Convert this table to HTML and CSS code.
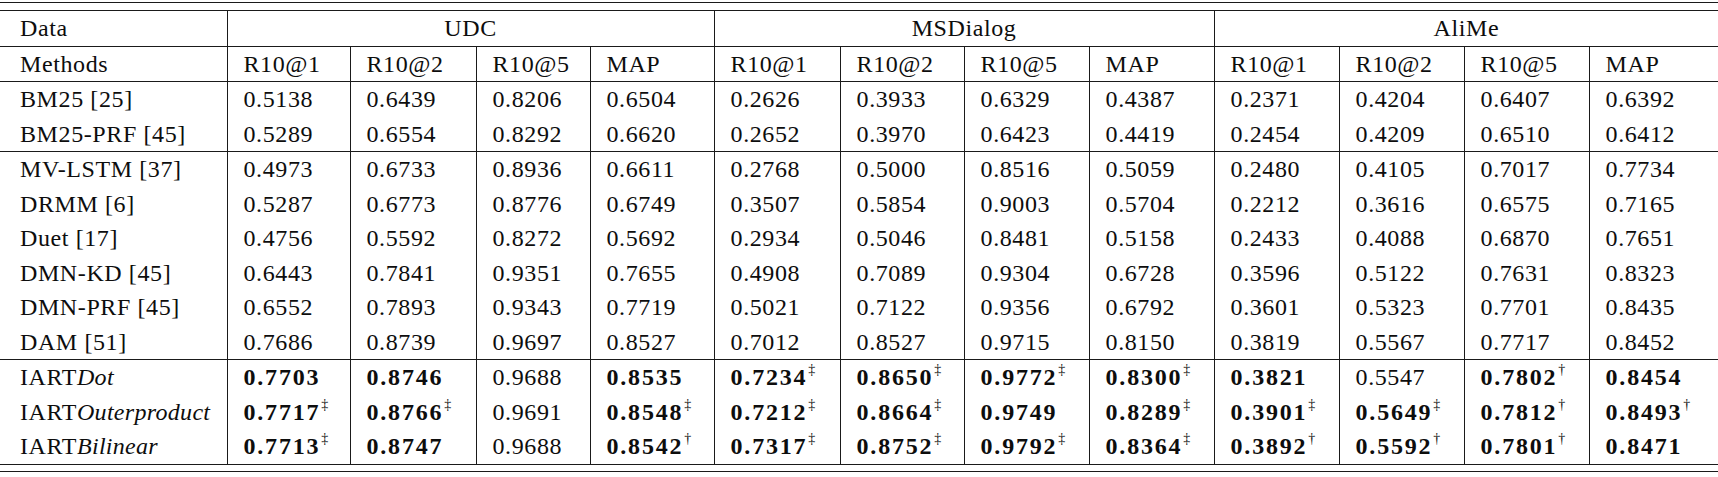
FILE: index.html
```html
<!DOCTYPE html>
<html>
<head>
<meta charset="utf-8">
<link rel="stylesheet" href="styles.css">
</head>
<body>
<div class="frame">
<table class="results">
<colgroup>
<col class="c0"><col class="c1"><col class="c2"><col class="c3"><col class="c4"><col class="c5"><col class="c6"><col class="c7"><col class="c8"><col class="c9"><col class="c10"><col class="c11"><col class="c12">
</colgroup>
<thead>
<tr class="r">
<td class="lab vr">Data</td>
<td class="grp vr" colspan="4">UDC</td>
<td class="grp vr" colspan="4">MSDialog</td>
<td class="grp" colspan="4">AliMe</td>
</tr>
<tr class="r sep">
<td class="lab vr">Methods</td>
<td class="vr">R10@1</td><td class="vr">R10@2</td><td class="vr">R10@5</td><td class="vr">MAP</td>
<td class="vr">R10@1</td><td class="vr">R10@2</td><td class="vr">R10@5</td><td class="vr">MAP</td>
<td class="vr">R10@1</td><td class="vr">R10@2</td><td class="vr">R10@5</td><td>MAP</td>
</tr>
</thead>
<tbody class="grp-top">
<tr class="r">
<td class="lab vr">BM25 [25]</td>
<td class="vr">0.5138</td><td class="vr">0.6439</td><td class="vr">0.8206</td><td class="vr">0.6504</td>
<td class="vr">0.2626</td><td class="vr">0.3933</td><td class="vr">0.6329</td><td class="vr">0.4387</td>
<td class="vr">0.2371</td><td class="vr">0.4204</td><td class="vr">0.6407</td><td>0.6392</td>
</tr>
<tr class="r">
<td class="lab vr">BM25-PRF [45]</td>
<td class="vr">0.5289</td><td class="vr">0.6554</td><td class="vr">0.8292</td><td class="vr">0.6620</td>
<td class="vr">0.2652</td><td class="vr">0.3970</td><td class="vr">0.6423</td><td class="vr">0.4419</td>
<td class="vr">0.2454</td><td class="vr">0.4209</td><td class="vr">0.6510</td><td>0.6412</td>
</tr>
</tbody>
<tbody class="grp-top">
<tr class="r">
<td class="lab vr">MV-LSTM [37]</td>
<td class="vr">0.4973</td><td class="vr">0.6733</td><td class="vr">0.8936</td><td class="vr">0.6611</td>
<td class="vr">0.2768</td><td class="vr">0.5000</td><td class="vr">0.8516</td><td class="vr">0.5059</td>
<td class="vr">0.2480</td><td class="vr">0.4105</td><td class="vr">0.7017</td><td>0.7734</td>
</tr>
<tr class="r">
<td class="lab vr">DRMM [6]</td>
<td class="vr">0.5287</td><td class="vr">0.6773</td><td class="vr">0.8776</td><td class="vr">0.6749</td>
<td class="vr">0.3507</td><td class="vr">0.5854</td><td class="vr">0.9003</td><td class="vr">0.5704</td>
<td class="vr">0.2212</td><td class="vr">0.3616</td><td class="vr">0.6575</td><td>0.7165</td>
</tr>
<tr class="r">
<td class="lab vr">Duet [17]</td>
<td class="vr">0.4756</td><td class="vr">0.5592</td><td class="vr">0.8272</td><td class="vr">0.5692</td>
<td class="vr">0.2934</td><td class="vr">0.5046</td><td class="vr">0.8481</td><td class="vr">0.5158</td>
<td class="vr">0.2433</td><td class="vr">0.4088</td><td class="vr">0.6870</td><td>0.7651</td>
</tr>
<tr class="r">
<td class="lab vr">DMN-KD [45]</td>
<td class="vr">0.6443</td><td class="vr">0.7841</td><td class="vr">0.9351</td><td class="vr">0.7655</td>
<td class="vr">0.4908</td><td class="vr">0.7089</td><td class="vr">0.9304</td><td class="vr">0.6728</td>
<td class="vr">0.3596</td><td class="vr">0.5122</td><td class="vr">0.7631</td><td>0.8323</td>
</tr>
<tr class="r">
<td class="lab vr">DMN-PRF [45]</td>
<td class="vr">0.6552</td><td class="vr">0.7893</td><td class="vr">0.9343</td><td class="vr">0.7719</td>
<td class="vr">0.5021</td><td class="vr">0.7122</td><td class="vr">0.9356</td><td class="vr">0.6792</td>
<td class="vr">0.3601</td><td class="vr">0.5323</td><td class="vr">0.7701</td><td>0.8435</td>
</tr>
<tr class="r">
<td class="lab vr">DAM [51]</td>
<td class="vr">0.7686</td><td class="vr">0.8739</td><td class="vr">0.9697</td><td class="vr">0.8527</td>
<td class="vr">0.7012</td><td class="vr">0.8527</td><td class="vr">0.9715</td><td class="vr">0.8150</td>
<td class="vr">0.3819</td><td class="vr">0.5567</td><td class="vr">0.7717</td><td>0.8452</td>
</tr>
</tbody>
<tbody class="grp-top">
<tr class="r">
<td class="lab vr">IART<i>Dot</i></td>
<td class="vr"><b>0.7703</b></td><td class="vr"><b>0.8746</b></td><td class="vr">0.9688</td><td class="vr"><b>0.8535</b></td>
<td class="vr"><b>0.7234</b><sup>‡</sup></td><td class="vr"><b>0.8650</b><sup>‡</sup></td><td class="vr"><b>0.9772</b><sup>‡</sup></td><td class="vr"><b>0.8300</b><sup>‡</sup></td>
<td class="vr"><b>0.3821</b></td><td class="vr">0.5547</td><td class="vr"><b>0.7802</b><sup>†</sup></td><td><b>0.8454</b></td>
</tr>
<tr class="r">
<td class="lab vr">IART<i>Outerproduct</i></td>
<td class="vr"><b>0.7717</b><sup>‡</sup></td><td class="vr"><b>0.8766</b><sup>‡</sup></td><td class="vr">0.9691</td><td class="vr"><b>0.8548</b><sup>‡</sup></td>
<td class="vr"><b>0.7212</b><sup>‡</sup></td><td class="vr"><b>0.8664</b><sup>‡</sup></td><td class="vr"><b>0.9749</b></td><td class="vr"><b>0.8289</b><sup>‡</sup></td>
<td class="vr"><b>0.3901</b><sup>‡</sup></td><td class="vr"><b>0.5649</b><sup>‡</sup></td><td class="vr"><b>0.7812</b><sup>†</sup></td><td><b>0.8493</b><sup>†</sup></td>
</tr>
<tr class="r">
<td class="lab vr">IART<i>Bilinear</i></td>
<td class="vr"><b>0.7713</b><sup>‡</sup></td><td class="vr"><b>0.8747</b></td><td class="vr">0.9688</td><td class="vr"><b>0.8542</b><sup>†</sup></td>
<td class="vr"><b>0.7317</b><sup>‡</sup></td><td class="vr"><b>0.8752</b><sup>‡</sup></td><td class="vr"><b>0.9792</b><sup>‡</sup></td><td class="vr"><b>0.8364</b><sup>‡</sup></td>
<td class="vr"><b>0.3892</b><sup>†</sup></td><td class="vr"><b>0.5592</b><sup>†</sup></td><td class="vr"><b>0.7801</b><sup>†</sup></td><td><b>0.8471</b></td>
</tr>
</tbody>
</table>
</div>
</body>
</html>
```
FILE: styles.css
```css
html, body {
  margin: 0;
  padding: 0;
  background: #ffffff;
}

body {
  font-family: "Liberation Serif", "DejaVu Serif", serif;
  color: #0d0d0d;
}

.frame {
  width: 1718px;
  margin-top: 2px;
  padding-top: 7px;
  padding-bottom: 6px;
  border-top: 1px solid #1a1a1a;
  border-bottom: 1px solid #1a1a1a;
}

.results {
  width: 1718px;
  border-collapse: collapse;
  table-layout: fixed;
  border-top: 1px solid #1a1a1a;
  border-bottom: 1px solid #1a1a1a;
  font-family: "Liberation Serif", "DejaVu Serif", serif;
  font-size: 24px;
  letter-spacing: 0.6px;
}

.c0 { width: 227px; }
.c1 { width: 123px; }
.c2 { width: 126px; }
.c3 { width: 114px; }
.c4 { width: 124px; }
.c5 { width: 126px; }
.c6 { width: 124px; }
.c7 { width: 125px; }
.c8 { width: 125px; }
.c9 { width: 125px; }
.c10 { width: 125px; }
.c11 { width: 125px; }
.c12 { width: 129px; }

.r td {
  height: 34.5px;
  padding: 0 0 0 16px;
  vertical-align: middle;
  white-space: nowrap;
  line-height: 24px;
}

.r td.lab {
  padding-left: 20px;
}

.r td.grp {
  text-align: center;
  padding-left: 0;
}

.vr {
  border-right: 1px solid #1a1a1a;
}

.r.sep td {
  border-top: 1px solid #1a1a1a;
}

.grp-top {
  border-top: 1px solid #1a1a1a;
}

.results b {
  font-weight: 700;
  letter-spacing: 1.8px;
}

.results i {
  font-style: italic;
  letter-spacing: 0.3px;
}

.results sup {
  font-size: 14px;
  letter-spacing: 0;
  vertical-align: top;
  position: relative;
  top: -2px;
  margin-left: 1px;
  line-height: 14px;
}
```
